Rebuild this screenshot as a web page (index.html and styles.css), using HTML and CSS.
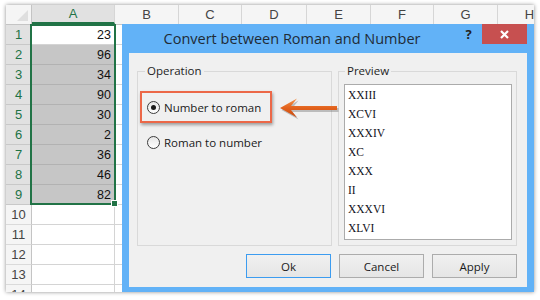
FILE: index.html
```html
<!DOCTYPE html>
<html>
<head>
<meta charset="utf-8">
<link rel="stylesheet" href="styles.css">
</head>
<body>
<div class="frame">
  <div class="sheet">
    <div class="hdr">
      <div class="corner"><span class="tri"></span></div>
      <div class="ch ch-a sel">A</div>
      <div class="ch w64">B</div>
      <div class="ch w63">C</div>
      <div class="ch w65">D</div>
      <div class="ch w64">E</div>
      <div class="ch w63">F</div>
      <div class="ch w64">G</div>
      <div class="ch w64">H</div>
    </div>
    <div class="row"><div class="rn sel">1</div><div class="ca active">23</div><div class="cb"></div><div class="rest"></div></div>
    <div class="row"><div class="rn sel">2</div><div class="ca sel">96</div><div class="cb"></div><div class="rest"></div></div>
    <div class="row"><div class="rn sel">3</div><div class="ca sel">34</div><div class="cb"></div><div class="rest"></div></div>
    <div class="row"><div class="rn sel">4</div><div class="ca sel">90</div><div class="cb"></div><div class="rest"></div></div>
    <div class="row"><div class="rn sel">5</div><div class="ca sel">30</div><div class="cb"></div><div class="rest"></div></div>
    <div class="row"><div class="rn sel">6</div><div class="ca sel">2</div><div class="cb"></div><div class="rest"></div></div>
    <div class="row"><div class="rn sel">7</div><div class="ca sel">36</div><div class="cb"></div><div class="rest"></div></div>
    <div class="row"><div class="rn sel">8</div><div class="ca sel">46</div><div class="cb"></div><div class="rest"></div></div>
    <div class="row"><div class="rn sel">9</div><div class="ca sel">82</div><div class="cb"></div><div class="rest"></div></div>
    <div class="row"><div class="rn">10</div><div class="ca"></div><div class="cb"></div><div class="rest"></div></div>
    <div class="row"><div class="rn">11</div><div class="ca"></div><div class="cb"></div><div class="rest"></div></div>
    <div class="row"><div class="rn">12</div><div class="ca"></div><div class="cb"></div><div class="rest"></div></div>
    <div class="row"><div class="rn">13</div><div class="ca"></div><div class="cb"></div><div class="rest"></div></div>
    <div class="row"><div class="rn">14</div><div class="ca"></div><div class="cb"></div><div class="rest"></div></div>

    <div class="selection"></div>
    <div class="handle"></div>

    <div class="dialog">
      <div class="titlebar">
        <div class="title">Convert between Roman and Number</div>
        <div class="help">?</div>
        <div class="close">
          <svg width="9" height="9" viewBox="0 0 9 9"><path d="M1 1 L8 8 M8 1 L1 8" stroke="#fff" stroke-width="2.2" fill="none"/></svg>
        </div>
      </div>
      <div class="panel">
        <div class="groups">
          <fieldset class="group op">
            <legend>Operation</legend>
            <div class="op-body">
              <label class="opt highlight"><span class="radio checked"></span><span class="opt-text">Number to roman</span></label>
              <label class="opt"><span class="radio"></span><span class="opt-text">Roman to number</span></label>
            </div>
          </fieldset>
          <fieldset class="group pv">
            <legend>Preview</legend>
            <div class="pv-body">
              <div class="list">
                <div>XXIII</div>
                <div>XCVI</div>
                <div>XXXIV</div>
                <div>XC</div>
                <div>XXX</div>
                <div>II</div>
                <div>XXXVI</div>
                <div>XLVI</div>
              </div>
            </div>
          </fieldset>
        </div>
        <div class="buttons">
          <button class="btn default">Ok</button>
          <button class="btn">Cancel</button>
          <button class="btn">Apply</button>
        </div>
      </div>
      <svg class="arrow" width="64" height="28" viewBox="0 0 64 28">
        <defs>
          <linearGradient id="ag" x1="0" y1="0" x2="0" y2="1">
            <stop offset="0" stop-color="#f3934a"/>
            <stop offset="0.5" stop-color="#e2611c"/>
            <stop offset="1" stop-color="#c94a0e"/>
          </linearGradient>
        </defs>
        <polygon points="2,12 19,2.5 13,10 59,10 59,14 13,14 19,21.5" fill="#6f6f6f" opacity="0.4" transform="translate(1.5,2)"/>
        <polygon points="2,12 19,2.5 13,10 59,10 59,14 13,14 19,21.5" fill="url(#ag)"/>
      </svg>
    </div>
  </div>
</div>
</body>
</html>
```

FILE: styles.css
```css
html, body {
  margin: 0;
  padding: 0;
  background: #ffffff;
}
body {
  width: 540px;
  height: 300px;
  overflow: hidden;
}
.frame {
  padding: 5px 6px 8px 6px;
}
.sheet {
  position: relative;
  width: 528px;
  height: 287px;
  overflow: hidden;
  background: #ffffff;
  box-shadow: 0 0 4px rgba(0, 0, 0, 0.45);
  display: flex;
  flex-direction: column;
  font-family: "Liberation Sans", Arial, sans-serif;
}

/* column header */
.hdr {
  display: flex;
  height: 20px;
  flex: none;
  background: #f5f5f5;
  border-bottom: 1px solid #c4c4c4;
  box-sizing: border-box;
}
.corner {
  width: 26px;
  flex: none;
  box-sizing: border-box;
  border-right: 1px solid #c4c4c4;
  position: relative;
}
.tri {
  position: absolute;
  right: 3px;
  bottom: 3px;
  width: 0;
  height: 0;
  border-left: 11px solid transparent;
  border-bottom: 11px solid #dfdfdf;
}
.ch {
  flex: none;
  box-sizing: border-box;
  border-right: 1px solid #d6d6d6;
  display: flex;
  align-items: center;
  justify-content: center;
  font-size: 13px;
  color: #444444;
}
.ch-a { width: 83px; }
.ch.sel {
  background: #e1e1e1;
  color: #217346;
  border-bottom: 2px solid #217346;
}
.w63 { width: 63px; }
.w64 { width: 64px; }
.w65 { width: 65px; }

/* rows */
.row {
  display: flex;
  height: 20px;
  flex: none;
}
.rn {
  width: 26px;
  flex: none;
  box-sizing: border-box;
  background: #f5f5f5;
  border-right: 1px solid #c4c4c4;
  border-bottom: 1px solid #dadada;
  display: flex;
  align-items: center;
  justify-content: center;
  font-size: 13px;
  color: #444444;
}
.rn.sel {
  background: #e1e1e1;
  color: #217346;
  border-bottom-color: #c8c8c8;
}
.ca {
  width: 83px;
  flex: none;
  box-sizing: border-box;
  border-right: 1px solid #d4d4d4;
  border-bottom: 1px solid #d4d4d4;
  text-align: right;
  padding-right: 3px;
  font-size: 12.5px;
  line-height: 20px;
  color: #111111;
}
.ca.sel {
  background: #c6c6c6;
  border-bottom-color: #b2b2b2;
}
.ca.active {
  background: #ffffff;
}
.cb {
  width: 64px;
  flex: none;
  box-sizing: border-box;
  border-right: 1px solid #d4d4d4;
  border-bottom: 1px solid #d4d4d4;
}
.rest {
  flex: 1;
  border-bottom: 1px solid #d4d4d4;
}

.selection {
  position: absolute;
  left: 24px;
  top: 19px;
  width: 86px;
  height: 181px;
  box-sizing: border-box;
  border: 2px solid #217346;
}
.handle {
  position: absolute;
  left: 105px;
  top: 195px;
  width: 5px;
  height: 5px;
  background: #217346;
  border: 1px solid #ffffff;
}

/* dialog */
.dialog {
  position: absolute;
  left: 116px;
  top: 19px;
  width: 412px;
  height: 268px;
  box-sizing: border-box;
  background: #62b2f7;
  padding: 0 7px 5px 7px;
  display: flex;
  flex-direction: column;
  font-family: "Open Sans", "Noto Sans", sans-serif;
}
.titlebar {
  display: flex;
  height: 29px;
  flex: none;
}
.title {
  flex: 1;
  text-align: center;
  font-size: 14.5px;
  line-height: 29px;
  color: #1f2b36;
}
.help {
  width: 27px;
  text-align: center;
  font-size: 13px;
  font-weight: bold;
  line-height: 20px;
  color: #222222;
}
.close {
  width: 45px;
  height: 20px;
  background: #c75050;
  display: flex;
  align-items: center;
  justify-content: center;
}
.close svg { display: block; }

.panel {
  flex: 1;
  background: #f0f0f0;
  padding: 11px 10px 9px 8px;
  display: flex;
  flex-direction: column;
  gap: 8px;
}
.groups {
  display: flex;
  gap: 6px;
  height: 182px;
  flex: none;
}
.group {
  margin: 0;
  padding: 0;
  border: 1px solid #d9d9d9;
  box-sizing: border-box;
  height: 182px;
  min-width: 0;
}
.group legend {
  font-size: 11.5px;
  line-height: 14px;
  padding: 0 2px;
  color: #1e1e1e;
}
.op { width: 195px; }
.op legend { margin-left: 7px; }
.pv { width: 179px; }
.pv legend { margin-left: 6px; }

.op-body {
  padding: 13px 0 0 2px;
  display: flex;
  flex-direction: column;
  gap: 3px;
}
.opt {
  width: 132px;
  height: 32px;
  box-sizing: border-box;
  border: 2px solid transparent;
  display: flex;
  align-items: center;
  padding-left: 5px;
  font-size: 11.5px;
  color: #1a1a1a;
}
.opt.highlight {
  border-color: #ec6848;
  box-shadow: 1px 2px 3px rgba(0, 0, 0, 0.35);
}
.radio {
  width: 13px;
  height: 13px;
  box-sizing: border-box;
  border-radius: 50%;
  border: 1px solid #3c3c3c;
  background: linear-gradient(#e6e6e6, #ffffff);
  display: flex;
  align-items: center;
  justify-content: center;
  flex: none;
}
.radio.checked::after {
  content: "";
  width: 5px;
  height: 5px;
  border-radius: 50%;
  background: #1a1a1a;
}
.opt-text {
  margin-left: 4px;
}

.pv-body {
  padding: 6px 4px 5px 5px;
  height: 167px;
  box-sizing: border-box;
  display: flex;
}
.list {
  flex: 1;
  background: #ffffff;
  border: 1px solid #ababab;
  padding: 1px 3px;
  font-family: "Liberation Serif", "Times New Roman", serif;
  font-size: 11.5px;
  line-height: 19px;
  color: #101020;
}

.buttons {
  display: flex;
  justify-content: flex-end;
  gap: 8px;
  height: 24px;
  flex: none;
}
.btn {
  width: 85px;
  height: 24px;
  box-sizing: border-box;
  border: 1px solid #acacac;
  background: linear-gradient(#f0f0f0, #e5e5e5);
  font-family: "Open Sans", "Noto Sans", sans-serif;
  font-size: 11.5px;
  color: #1a1a1a;
  padding: 0;
  margin: 0;
}
.btn.default {
  border-color: #3c9cf0;
}

.arrow {
  position: absolute;
  left: 156px;
  top: 72px;
}
```
